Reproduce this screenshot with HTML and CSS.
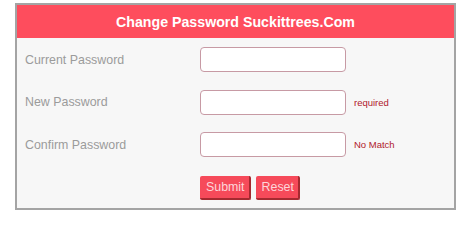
FILE: index.html
```html
<!DOCTYPE html>
<html>
<head>
<meta charset="utf-8">
<link rel="stylesheet" href="styles.css">
</head>
<body>
<div class="box">
  <div class="header">Change Password Suckittrees.Com</div>
  <form class="form">
    <label class="label">Current Password</label>
    <input class="field" type="password">
    <span class="msg"></span>

    <label class="label">New Password</label>
    <input class="field" type="password">
    <span class="msg">required</span>

    <label class="label">Confirm Password</label>
    <input class="field" type="password">
    <span class="msg">No Match</span>

    <span></span>
    <div class="actions">
      <button type="button" class="btn">Submit</button>
      <button type="button" class="btn">Reset</button>
    </div>
  </form>
</div>
</body>
</html>
```

FILE: styles.css
```css
html, body {
  margin: 0;
  padding: 0;
  background: #ffffff;
}
body {
  font-family: "Liberation Sans", Arial, sans-serif;
}
.box {
  margin: 3px 0 0 15px;
  width: 437px;
  border: 2px solid #a4a4a4;
  background: #f7f7f7;
}
.header {
  height: 33px;
  background: #fe4d5d;
  color: #ffffff;
  font-weight: bold;
  font-size: 14.2px;
  display: flex;
  align-items: center;
  justify-content: center;
  padding-top: 1px;
  box-sizing: border-box;
}
.form {
  display: grid;
  grid-template-columns: 167px 146px auto;
  column-gap: 8px;
  row-gap: 17.5px;
  align-items: center;
  padding: 9px 8px 8px 8px;
}
.label {
  color: #9b9b9b;
  font-size: 12.4px;
}
.field {
  box-sizing: border-box;
  width: 146px;
  height: 25px;
  margin: 0;
  border: 1px solid #c79aa4;
  border-radius: 4px;
  background: #ffffff;
}
.msg {
  color: #b0202c;
  font-size: 9.5px;
}
.actions {
  grid-column: 2 / 4;
  display: flex;
  gap: 5px;
  margin-top: 1.5px;
}
.btn {
  height: 24px;
  margin: 0;
  padding: 0 4px 0 6px;
  background: #f64a5a;
  color: #fdd6da;
  font-family: "Liberation Sans", Arial, sans-serif;
  font-size: 12.4px;
  border: 0;
  border-right: 2px solid #a52a30;
  border-bottom: 2px solid #a52a30;
  border-radius: 2px;
}
```
